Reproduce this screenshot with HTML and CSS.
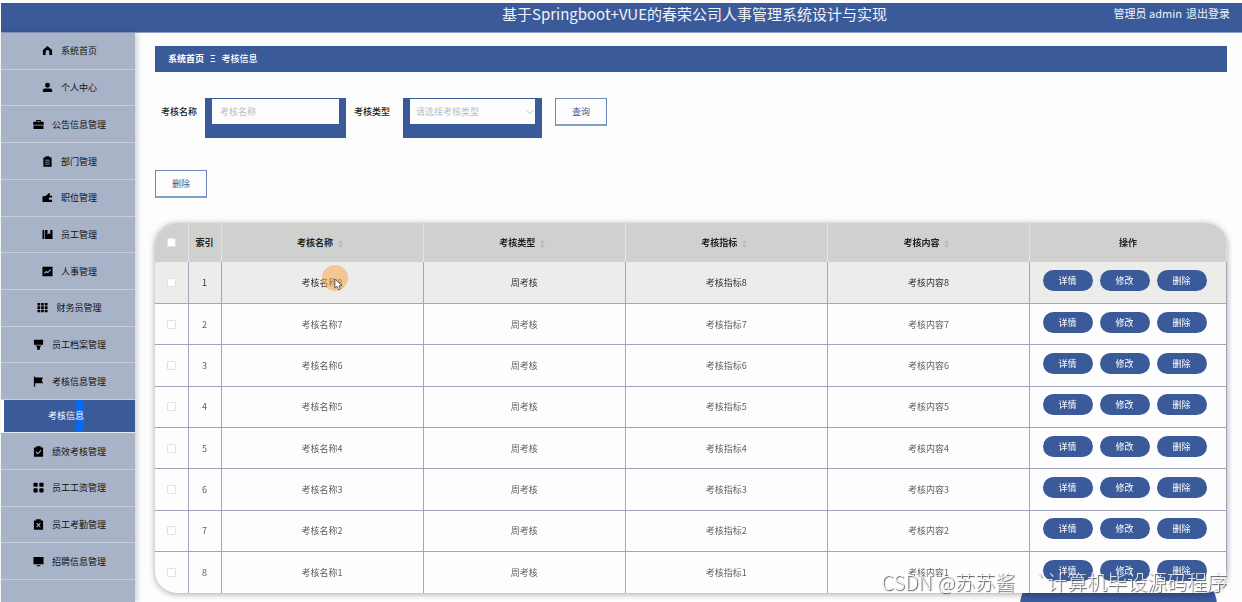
FILE: index.html
```
<!DOCTYPE html>
<html lang="zh-CN">
<head>
    <meta charset="UTF-8">
    <meta name="viewport" content="width=device-width, initial-scale=1.0">
    <title>人事管理系统</title>
    <link rel="stylesheet" href="styles.css">
</head>
<body>

    <header class="topbar">
        <h1>基于Springboot+VUE的春荣公司人事管理系统设计与实现</h1>
        <div class="user">
            <span>管理员 admin</span>
            <a href="#">退出登录</a>
        </div>
    </header>

    <div class="layout">
        <nav class="sidebar">
            <a class="item" href="#"><svg viewBox="0 0 12 12"><path d="M6 1L1 5.5V11h3V7.500a2 2 0 0 1 4 0V11h3V5.500z"/></svg>系统首页</a>
            <a class="item" href="#"><svg viewBox="0 0 12 12"><circle cx="6" cy="3.500" r="2.700"/><path d="M1 11V9q0-2 2-2h6q2 0 2 2v2z"/></svg>个人中心</a>
            <a class="item" href="#"><svg viewBox="0 0 12 12"><path d="M3.500 3V1.200h5V3H11q.8 0 .8.800V6.300H.2V3.800Q.2 3 1 3zM4.600 3h2.800V2.200H4.600zM.6 7.200h10.800V11H.6z"/></svg>公告信息管理</a>
            <a class="item" href="#"><svg viewBox="0 0 12 12"><path fill-rule="evenodd" d="M1.500 1.500h2.300V.4h4.400v1.100h2.300v10.200h-9zM3.500 4v1h5V4zM3.500 6.200v1h5v-1zM3.500 8.400v1h5v-1z"/></svg>部门管理</a>
            <a class="item" href="#"><svg viewBox="0 0 12 12"><path d="M.5 4.800L4.500 4l3-3 1.500.8L8.200 4H11v2H7.500v2.500H11V11H.5z"/></svg>职位管理</a>
            <a class="item" href="#"><svg viewBox="0 0 12 12"><path d="M.5 1h2v10h-2zM3.300 1H6v5l1.500-1.300L9 6V1h2.500v10H3.300z"/></svg>员工管理</a>
            <a class="item" href="#"><svg viewBox="0 0 12 12"><path d="M.5 .8h11v10.400H.5z"/><path class="cut" d="M2.500 8l2.200-2 1.600 1.200 3.200-3.200"/></svg>人事管理</a>
            <a class="item" href="#"><svg viewBox="0 0 12 12"><path d="M.5 1h3v2.800h-3zM4.500 1h3v2.800h-3zM8.500 1h3v2.800h-3zM.5 4.700h3v2.800h-3zM4.500 4.700h3v2.800h-3zM8.500 4.700h3v2.800h-3zM.5 8.400h3v2.800h-3zM4.500 8.400h3v2.800h-3zM8.500 8.400h3v2.800h-3z"/></svg>财务员管理</a>
            <a class="item" href="#"><svg viewBox="0 0 12 12"><path d="M1 .8h10v5.400H1zM2.500 7h7L7.500 9v2.800h-3V9z"/></svg>员工档案管理</a>
            <a class="item" href="#"><svg viewBox="0 0 12 12"><path d="M1 .5h1.300V1.500H11L9.500 4.500 11 7.800H2.300v4H1z"/></svg>考核信息管理</a>
            <a class="item sub" href="#"><span>考核信</span><span class="selected">息</span></a>
            <a class="item" href="#"><svg viewBox="0 0 12 12"><path d="M1 1.500h2.500V.4h5v1.100H11v10.200H1z"/><path class="cut" d="M3.300 6.500l2 2 3.500-4"/></svg>绩效考核管理</a>
            <a class="item" href="#"><svg viewBox="0 0 12 12"><rect x=".5" y=".7" width="4.600" height="4.600" rx="1"/><rect x="6.900" y=".7" width="4.600" height="4.600" rx="1"/><rect x=".5" y="6.800" width="4.600" height="4.600" rx="1"/><rect x="6.900" y="6.800" width="4.600" height="4.600" rx="1"/></svg>员工工资管理</a>
            <a class="item" href="#"><svg viewBox="0 0 12 12"><path d="M1 1.500h2.500V.4h5v1.100H11v10.200H1z"/><path class="cut" d="M4 4.500l4 4.500M8 4.500L4 9"/></svg>员工考勤管理</a>
            <a class="item" href="#"><svg viewBox="0 0 12 12"><path d="M.5 1h11v8H.5zM4 10h4v1.300H4z"/></svg>招聘信息管理</a>
        </nav>

        <main class="content">
            <div class="breadcrumb"><a href="#">系统首页</a><span>Ξ</span><b>考核信息</b></div>

            <form class="search">
                <label for="name">考核名称</label>
                <div class="field"><input type="text" id="name" placeholder="考核名称"></div>
                <label for="type">考核类型</label>
                <div class="field type">
                    <select id="type"><option>请选择考核类型</option></select>
                    <svg class="arrow" viewBox="0 0 8 8"><path d="M1 2.500l3 3 3-3"/></svg>
                </div>
                <button type="button" class="btn">查询</button>
            </form>

            <div class="actions"><button type="button" class="btn">删除</button></div>

            <div class="table-box">
                <table>
                    <thead>
                        <tr>
                            <th class="narrow"><input type="checkbox" aria-label="全选"></th>
                            <th class="narrow">索引</th>
                            <th>考核名称<svg class="sort" viewBox="0 0 6 10"><path d="M3 0l3 4H0zM3 10L0 6h6z"/></svg></th>
                            <th>考核类型<svg class="sort" viewBox="0 0 6 10"><path d="M3 0l3 4H0zM3 10L0 6h6z"/></svg></th>
                            <th>考核指标<svg class="sort" viewBox="0 0 6 10"><path d="M3 0l3 4H0zM3 10L0 6h6z"/></svg></th>
                            <th>考核内容<svg class="sort" viewBox="0 0 6 10"><path d="M3 0l3 4H0zM3 10L0 6h6z"/></svg></th>
                            <th class="ops">操作</th>
                        </tr>
                    </thead>
                    <tbody id="rows"></tbody>
                </table>
            </div>
        </main>
    </div>

    <div class="corner"></div>
    <div class="watermark"><span>CSDN @苏苏酱</span><span>`计算机毕设源码程序</span></div>

    <script>
        const rows = document.getElementById("rows");

        // Newest record first
        for (let i = 1; i <= 8; i++) {
            const n = 9 - i;
            const pointer = i === 1 ? '<span class="pointer"><svg viewBox="0 0 10 14"><path d="M1 1v10l2.500-2 1.700 4 2-1-1.700-3.500H9z"/></svg></span>' : "";
            const tr = document.createElement("tr");
            if (i === 1) {
                tr.className = "hover";
            }
            tr.innerHTML = `
                <td><input type="checkbox" aria-label="选择${i}"></td>
                <td>${i}</td>
                <td><span class="name">考核名称${n}${pointer}</span></td>
                <td>周考核</td>
                <td>考核指标${n}</td>
                <td>考核内容${n}</td>
                <td>
                    <div class="row-btns">
                        <button type="button">详情</button>
                        <button type="button">修改</button>
                        <button type="button">删除</button>
                    </div>
                </td>`;
            rows.appendChild(tr);
        }
    </script>

</body>
</html>
```
FILE: styles.css
```
* {
    box-sizing: border-box;
}

body {
    margin: 0;
    padding: 3px 0 0 1px;
    height: 100vh;
    display: flex;
    flex-direction: column;
    overflow: hidden;
    background-color: #fdfdfd;
    color: #222;
    font-family: "Noto Sans CJK SC", sans-serif;
    font-size: 9px;
}

a {
    color: inherit;
    text-decoration: none;
}

button, input, select {
    font-family: inherit;
    font-size: inherit;
}

.topbar {
    display: grid;
    grid-template-columns: 1fr auto 1fr;
    height: 30px;
    flex-shrink: 0;
    padding: 0 12px 0 158px;
    background-color: #3a5a99;
    border-bottom: 1px solid #8d9fc4;
    color: #f0f3f8;
}

.topbar h1 {
    grid-column: 2;
    margin: 0;
    font-size: 15px;
    font-weight: 400;
    line-height: 21px;
}

.user {
    display: flex;
    justify-content: flex-end;
    gap: 4px;
    font-size: 11px;
    line-height: 21px;
}

.layout {
    display: flex;
    flex: 1;
    min-height: 0;
}

.sidebar {
    display: flex;
    flex-direction: column;
    flex-shrink: 0;
    width: 134px;
    padding-bottom: 22px;
    background-color: #a9b3c8;
    box-shadow: 2px 0 6px rgba(0, 0, 0, 0.2);
}

.item {
    display: flex;
    flex: 1;
    align-items: center;
    justify-content: center;
    gap: 8px;
    padding-left: 3px;
    border-bottom: 1px solid #c8cedb;
    color: #111;
}

.item svg {
    width: 11px;
    height: 11px;
}

.item .cut {
    fill: none;
    stroke: #a9b3c8;
    stroke-width: 1.2;
}

.item.sub {
    flex: 0 0 33px;
    align-items: stretch;
    gap: 0;
    padding: 0 7px 0 0;
    border-left: 3px solid #fff;
    border-bottom: 1px solid #e4e8f0;
    background-color: #3a5a99;
    color: #fff;
    line-height: 32px;
}

.selected {
    background-color: #0869ec;
}

.content {
    flex: 1;
    padding: 13px 15px 0 20px;
}

.breadcrumb {
    display: flex;
    gap: 6px;
    padding-left: 13px;
    background-color: #3a5a99;
    color: #fff;
    font-weight: 500;
    line-height: 26px;
}

.breadcrumb a {
    font-weight: 700;
}

.breadcrumb b {
    font-weight: 500;
}

.search {
    display: flex;
    align-items: flex-start;
    gap: 8px;
    margin-top: 26px;
    padding-left: 6px;
}

.search label {
    font-weight: 500;
    line-height: 27px;
}

.field {
    position: relative;
    width: 141px;
    height: 40px;
    padding: 1px 7px;
    background-color: #3a5a99;
}

.field.type {
    width: 139px;
    margin: 0 5px;
}

.field input,
.field select {
    display: block;
    width: 100%;
    height: 25px;
    padding: 0 8px;
    border: 0;
    border-radius: 0;
    background-color: #fdfdfd;
    color: #b8bcc6;
    appearance: none;
}

.field select {
    padding: 0 6px;
}

.field input::placeholder {
    color: #b8bcc6;
}

.arrow {
    position: absolute;
    top: 10px;
    right: 8px;
    width: 8px;
    height: 8px;
    fill: none;
    stroke: #b8bcc6;
}

.btn {
    width: 52px;
    height: 28px;
    padding: 0;
    border: 1px solid #6f87b6;
    border-bottom: 2px solid #7ba3c9;
    background-color: #fdfdfd;
    color: #3a5a99;
}

.actions {
    margin-top: 32px;
}

.table-box {
    position: relative;
    z-index: 1;
    margin-top: 25px;
    overflow: hidden;
    border-radius: 22px;
    background-color: #fdfdfd;
    box-shadow: 0 1px 6px rgba(0, 0, 0, 0.35);
}

table {
    width: 100%;
    height: 370px;
    table-layout: fixed;
    border-collapse: collapse;
    text-align: center;
}

th {
    height: 39px;
    padding: 0;
    background-color: #d0d0ce;
    border-right: 1px solid #e2e2e2;
    color: #222;
    font-weight: 700;
}

.narrow {
    width: 33px;
}

.ops {
    width: 197px;
}

.sort {
    width: 5px;
    height: 8px;
    margin: 0 4px 0 5px;
    vertical-align: middle;
    fill: #b6b9c8;
}

td {
    height: 41px;
    padding: 0;
    border-right: 1px solid #a3a5bd;
    border-bottom: 1px solid #a3a5bd;
    color: #606266;
}

tr:last-child td {
    border-bottom: 0;
}

.hover td {
    background-color: #ececeb;
    color: #333;
}

table input {
    display: block;
    width: 9px;
    height: 9px;
    margin: 0 auto;
    border: 1px solid #dfe1e8;
    border-radius: 1px;
    background-color: #fff;
    appearance: none;
}

.row-btns {
    display: flex;
    justify-content: center;
    gap: 7px;
    padding: 0 7px 4px 0;
}

.row-btns button {
    width: 50px;
    height: 21px;
    padding: 0;
    border: 0;
    border-radius: 11px;
    background-color: #3a5a99;
    color: #fff;
}

.name {
    position: relative;
}

/* Click highlight with the mouse arrow */
.pointer {
    position: absolute;
    top: -11px;
    right: -5px;
    width: 26px;
    height: 26px;
    border-radius: 50%;
    background-color: rgba(250, 170, 75, 0.55);
}

.pointer svg {
    position: absolute;
    top: 13px;
    left: 12px;
    width: 9px;
    height: 13px;
    fill: #fff;
    stroke: #555;
}

.corner {
    position: fixed;
    right: 25px;
    bottom: -33px;
    width: 197px;
    height: 60px;
    border-radius: 40px;
    background-color: #3a5a99;
}

.watermark {
    position: fixed;
    z-index: 2;
    right: 15px;
    bottom: 6px;
    display: flex;
    gap: 20px;
    color: rgba(255, 255, 255, 0.85);
    font-size: 20px;
    font-weight: 300;
    line-height: 28px;
    text-shadow: 1px 1px 1px #555;
    pointer-events: none;
}
```
